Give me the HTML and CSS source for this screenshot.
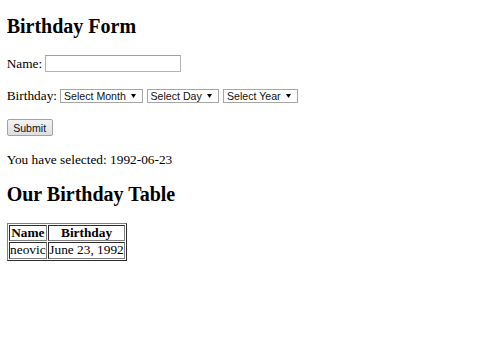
FILE: index.html
```html
<!DOCTYPE html>
<html>
<head>
<meta charset="utf-8">
<title>Birthday Form</title>
<link rel="stylesheet" href="styles.css">
</head>
<body>
<h2 class="title">Birthday Form</h2>
<form class="form">
  <div class="row">
    <span class="label">Name:</span>
    <input class="text-input" type="text">
  </div>
  <div class="row">
    <span class="label">Birthday:</span>
    <span class="select-box"><select class="select"><option>Select Month</option></select><svg class="arrow" width="5" height="4" viewBox="0 0 5 4"><polygon points="0,0 5,0 2.5,4" fill="#000"/></svg></span>
    <span class="select-box"><select class="select"><option>Select Day</option></select><svg class="arrow" width="5" height="4" viewBox="0 0 5 4"><polygon points="0,0 5,0 2.5,4" fill="#000"/></svg></span>
    <span class="select-box"><select class="select"><option>Select Year</option></select><svg class="arrow" width="5" height="4" viewBox="0 0 5 4"><polygon points="0,0 5,0 2.5,4" fill="#000"/></svg></span>
  </div>
  <div class="row"><button class="button" type="button">Submit</button></div>
</form>
<p class="text-row">You have selected: 1992-06-23</p>
<h2 class="title">Our Birthday Table</h2>
<table class="table">
  <tr><th class="cell">Name</th><th class="cell">Birthday</th></tr>
  <tr><td class="cell">neovic</td><td class="cell">June 23, 1992</td></tr>
</table>
</body>
</html>
```
FILE: styles.css
```css
html { background: #fff; }
body {
  margin: 0 6.67px;
  padding-top: 0.1px;
  font-family: "Liberation Serif", "Times New Roman", serif;
  font-size: 13.33px;
  line-height: 15.33px;
  color: #000;
}
.title {
  font-size: 20px;
  line-height: 23px;
  font-weight: bold;
  margin: 15px 0 17px;
}
.form { margin: 0; }
.row {
  display: flex;
  align-items: center;
  gap: 3px;
  margin: 16px 0;
}
.text-row {
  margin: 16px 0 15px;
}
.text-input {
  box-sizing: border-box;
  width: 136px;
  height: 17px;
  border: 1px solid #b4b4b4;
  border-top-color: #a0a0a0;
  padding: 0 2px;
  margin: 0;
  font-family: "Liberation Sans", Arial, sans-serif;
  font-size: 10.6px;
  outline: none;
}
.select-box {
  display: inline-flex;
  align-items: center;
  box-sizing: border-box;
  height: 14px;
  border: 1px solid #a6a6a6;
  background: #fff;
  padding: 0 6px 0 3px;
}
.select-box + .select-box { margin-left: 1px; }
.select {
  appearance: none;
  -webkit-appearance: none;
  border: none;
  background: transparent;
  font-family: "Liberation Sans", Arial, sans-serif;
  font-size: 10.6px;
  line-height: 12px;
  padding: 0;
  margin: 0;
  color: #111;
}
.arrow {
  display: block;
  margin-left: 4.5px;
}
.button {
  box-sizing: border-box;
  height: 17px;
  width: 46px;
  padding: 0;
  margin: 0;
  border: 1px solid #a3a3a3;
  border-radius: 2px;
  background: linear-gradient(#f3f3f3, #dedede);
  font-family: "Liberation Sans", Arial, sans-serif;
  font-size: 10.6px;
  color: #111;
}
.table {
  border: 1px outset #808080;
  border-spacing: 1.67px;
}
.cell {
  border: 1px inset #808080;
  padding: 0 0.4px;
  line-height: 14.5px;
}
```
